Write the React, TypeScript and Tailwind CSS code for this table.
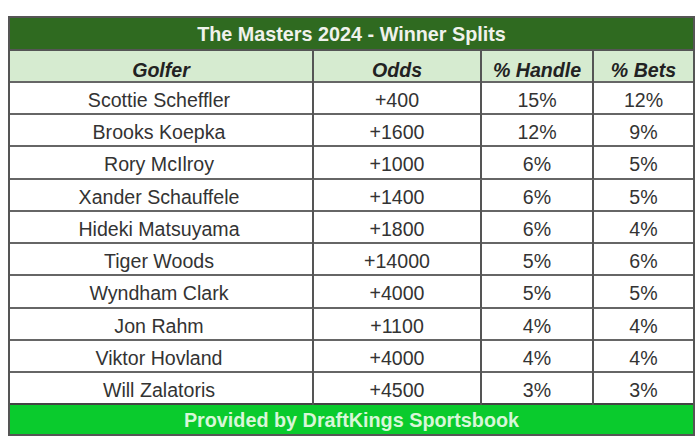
import React from "react";

const rows: [string, string, string, string][] = [
  ["Scottie Scheffler", "+400", "15%", "12%"],
  ["Brooks Koepka", "+1600", "12%", "9%"],
  ["Rory McIlroy", "+1000", "6%", "5%"],
  ["Xander Schauffele", "+1400", "6%", "5%"],
  ["Hideki Matsuyama", "+1800", "6%", "4%"],
  ["Tiger Woods", "+14000", "5%", "6%"],
  ["Wyndham Clark", "+4000", "5%", "5%"],
  ["Jon Rahm", "+1100", "4%", "4%"],
  ["Viktor Hovland", "+4000", "4%", "4%"],
  ["Will Zalatoris", "+4500", "3%", "3%"],
];

const heights = [32, 32, 33, 32, 32, 32, 33, 32, 32, 32];

export default function App() {
  return (
    <div
      className="w-[700px] h-[444px] bg-white pt-[16px] pl-[8px]"
      style={{ fontFamily: '"Liberation Sans", Arial, sans-serif' }}
    >
      <div className="w-[687px] border-2 border-[#555] box-border">
        <div className="h-[31px] bg-[#2f6a20] flex items-center justify-center pt-[3px] text-[19.8px] font-bold text-[#f0f2ec]">
          The Masters 2024 - Winner Splits
        </div>
        <div className="h-[32px] grid grid-cols-[302px_168px_112px_101px] border-t-2 border-[#555] bg-[#d6ebd0] text-[19.6px] font-bold italic text-[#222]">
          <div className="flex items-center justify-center pt-[5px]">Golfer</div>
          <div className="flex items-center justify-center pt-[5px] border-l-2 border-[#555]">Odds</div>
          <div className="flex items-center justify-center pt-[5px] border-l-2 border-[#555]">% Handle</div>
          <div className="flex items-center justify-center pt-[5px] border-l-2 border-[#555]">% Bets</div>
        </div>
        {rows.map((r, i) => (
          <div
            key={i}
            className="grid grid-cols-[302px_168px_112px_101px] border-t-2 border-[#666] bg-white text-[19.6px] text-[#333] box-border"
            style={{ height: heights[i] }}
          >
            <div className="flex items-center justify-center pt-[3px] pr-[4px]">{r[0]}</div>
            <div className="flex items-center justify-center pt-[3px] border-l-2 border-[#555]">{r[1]}</div>
            <div className="flex items-center justify-center pt-[3px] border-l-2 border-[#555]">{r[2]}</div>
            <div className="flex items-center justify-center pt-[3px] border-l-2 border-[#555]">{r[3]}</div>
          </div>
        ))}
        <div className="h-[31px] border-t-2 border-[#444] bg-[#0acb2d] flex items-center justify-center pt-[3px] text-[19.8px] font-bold text-[#d8f7d8]">
          Provided by DraftKings Sportsbook
        </div>
      </div>
    </div>
  );
}
